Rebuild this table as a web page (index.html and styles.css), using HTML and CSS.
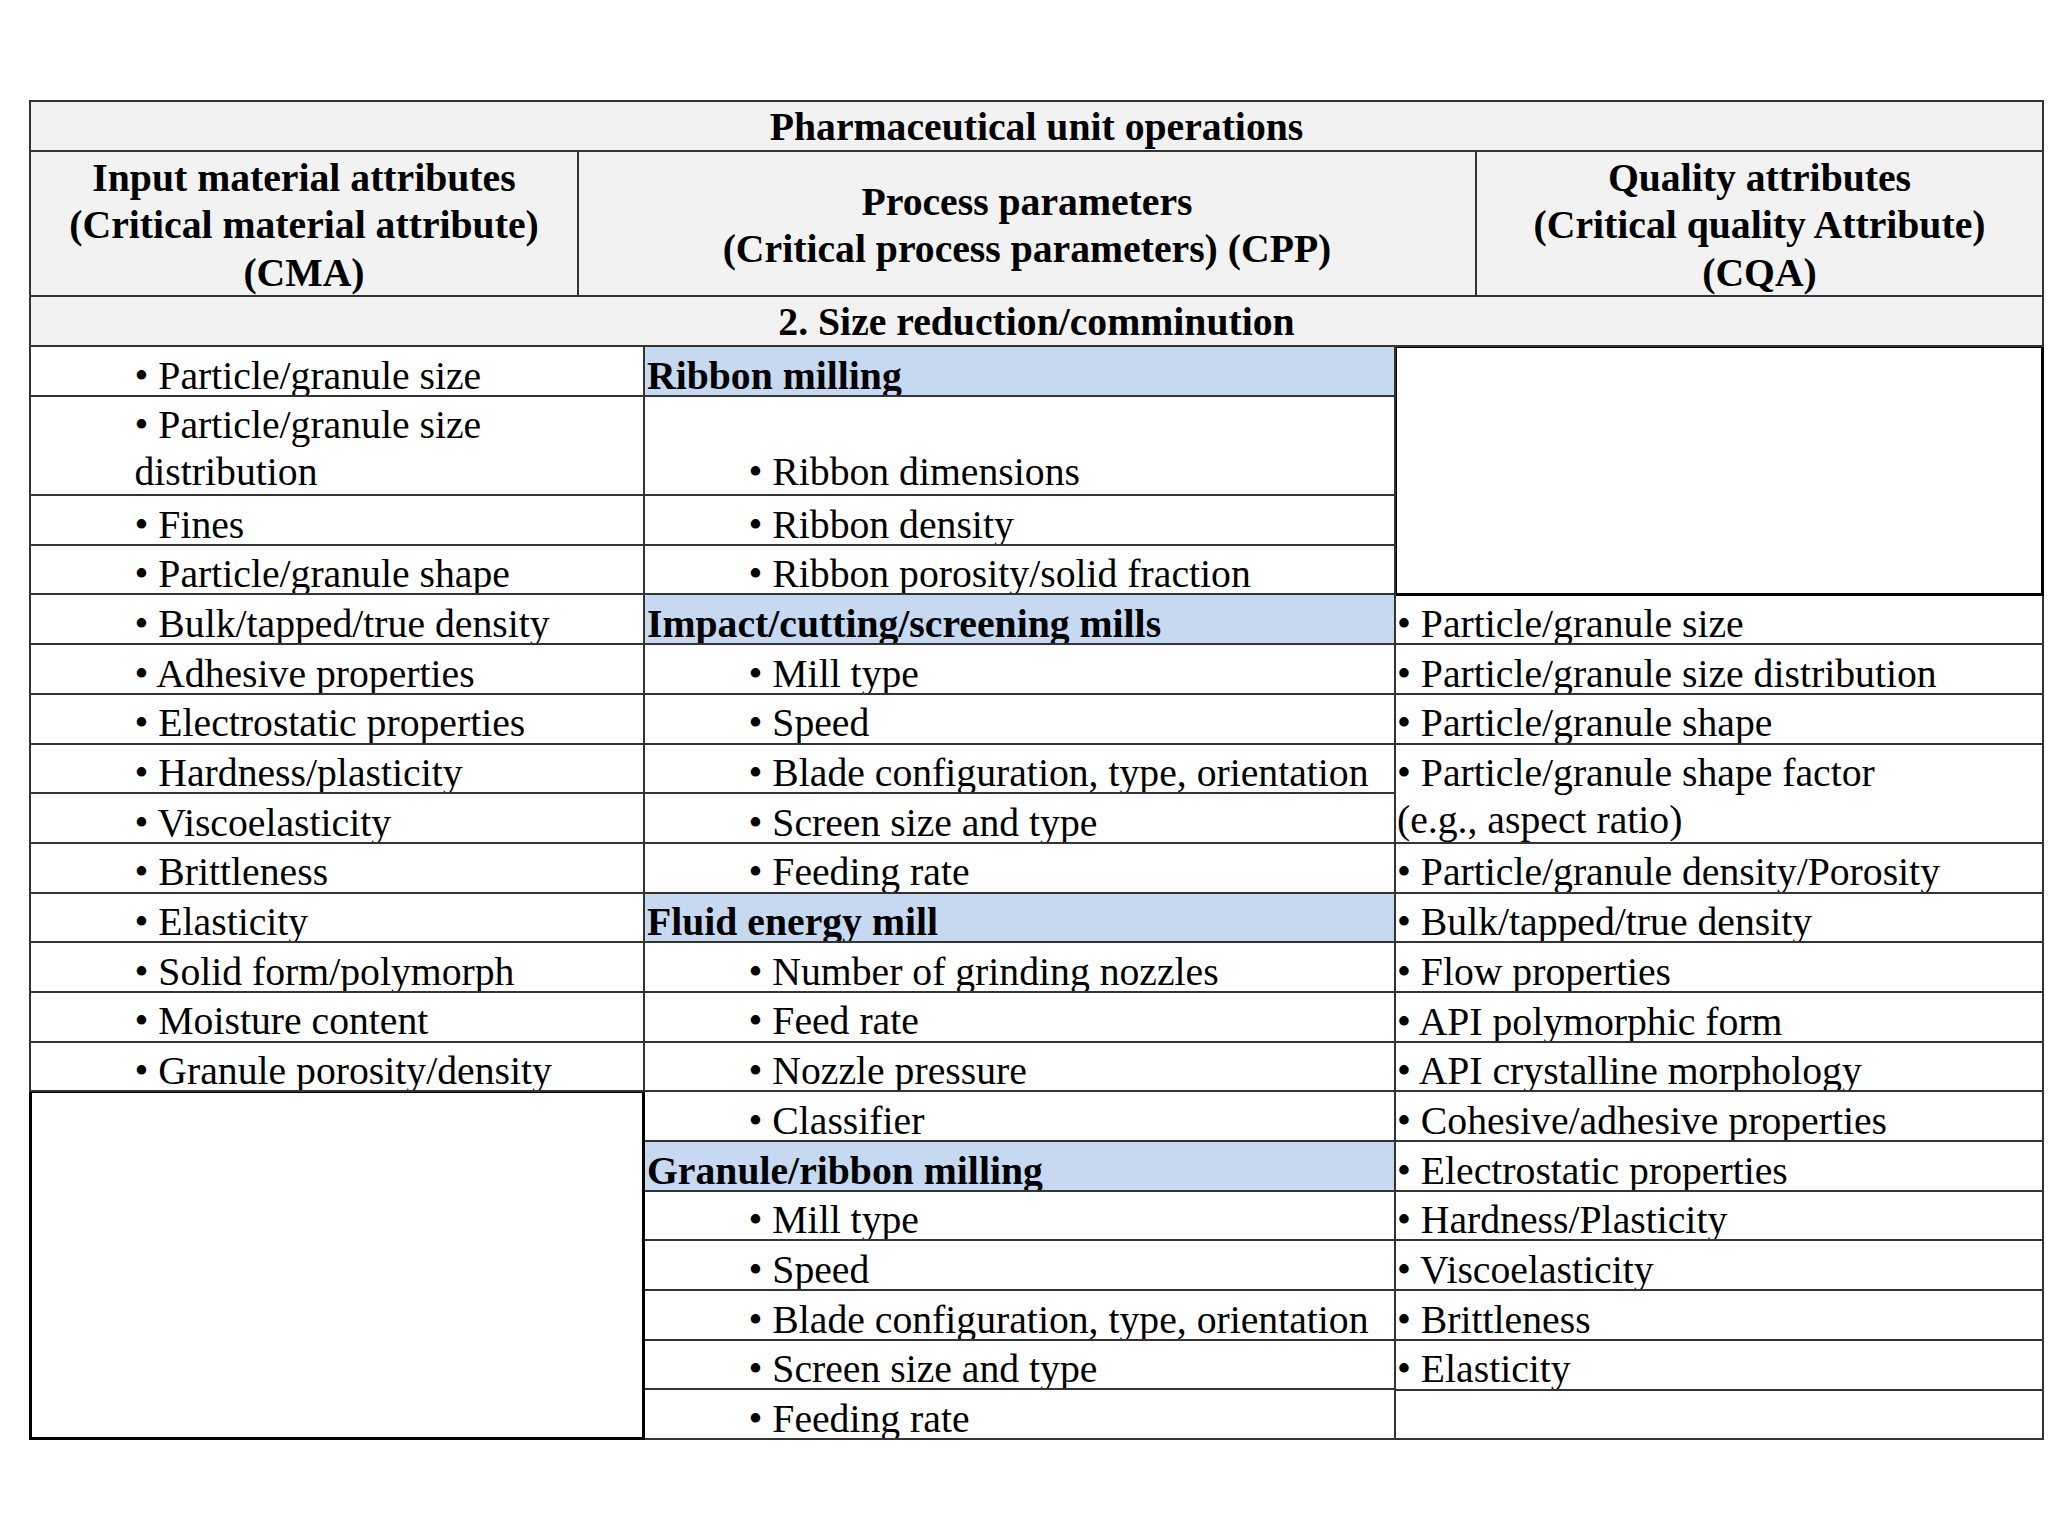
FILE: index.html
```html
<!DOCTYPE html>
<html lang="en">
<head>
<meta charset="utf-8">
<title>Pharmaceutical unit operations</title>
<link rel="stylesheet" href="styles.css">
</head>
<body>
<div class="table">
  <div class="title">Pharmaceutical unit operations</div>
  <div class="head">
    <div class="hcell h-left">Input material attributes<br>(Critical material attribute)<br>(CMA)</div>
    <div class="hcell h-mid">Process parameters<br>(Critical process parameters) (CPP)</div>
    <div class="hcell h-right">Quality attributes<br>(Critical quality Attribute)<br>(CQA)</div>
  </div>
  <div class="section">2. Size reduction/comminution</div>
  <div class="body">
    <div class="col col-left">
      <div class="cell u1">• Particle/granule size</div>
      <div class="cell u2">• Particle/granule size distribution</div>
      <div class="cell u1">• Fines</div>
      <div class="cell u1">• Particle/granule shape</div>
      <div class="cell u1">• Bulk/tapped/true density</div>
      <div class="cell u1">• Adhesive properties</div>
      <div class="cell u1">• Electrostatic properties</div>
      <div class="cell u1">• Hardness/plasticity</div>
      <div class="cell u1">• Viscoelasticity</div>
      <div class="cell u1">• Brittleness</div>
      <div class="cell u1">• Elasticity</div>
      <div class="cell u1">• Solid form/polymorph</div>
      <div class="cell u1">• Moisture content</div>
      <div class="cell u1">• Granule porosity/density</div>
      <div class="cell u7 merged merged-left"></div>
    </div>
    <div class="col col-mid">
      <div class="cell u1 hd">Ribbon milling</div>
      <div class="cell u2 bottom">• Ribbon dimensions</div>
      <div class="cell u1">• Ribbon density</div>
      <div class="cell u1">• Ribbon porosity/solid fraction</div>
      <div class="cell u1 hd">Impact/cutting/screening mills</div>
      <div class="cell u1">• Mill type</div>
      <div class="cell u1">• Speed</div>
      <div class="cell u1">• Blade configuration, type, orientation</div>
      <div class="cell u1">• Screen size and type</div>
      <div class="cell u1">• Feeding rate</div>
      <div class="cell u1 hd">Fluid energy mill</div>
      <div class="cell u1">• Number of grinding nozzles</div>
      <div class="cell u1">• Feed rate</div>
      <div class="cell u1">• Nozzle pressure</div>
      <div class="cell u1">• Classifier</div>
      <div class="cell u1 hd">Granule/ribbon milling</div>
      <div class="cell u1">• Mill type</div>
      <div class="cell u1">• Speed</div>
      <div class="cell u1">• Blade configuration, type, orientation</div>
      <div class="cell u1">• Screen size and type</div>
      <div class="cell u1">• Feeding rate</div>
    </div>
    <div class="col col-right">
      <div class="cell u5 merged merged-right"></div>
      <div class="cell u1">• Particle/granule size</div>
      <div class="cell u1">• Particle/granule size distribution</div>
      <div class="cell u1">• Particle/granule shape</div>
      <div class="cell u2">• Particle/granule shape factor<br>(e.g., aspect ratio)</div>
      <div class="cell u1">• Particle/granule density/Porosity</div>
      <div class="cell u1">• Bulk/tapped/true density</div>
      <div class="cell u1">• Flow properties</div>
      <div class="cell u1">• API polymorphic form</div>
      <div class="cell u1">• API crystalline morphology</div>
      <div class="cell u1">• Cohesive/adhesive properties</div>
      <div class="cell u1">• Electrostatic properties</div>
      <div class="cell u1">• Hardness/Plasticity</div>
      <div class="cell u1">• Viscoelasticity</div>
      <div class="cell u1">• Brittleness</div>
      <div class="cell u1">• Elasticity</div>
      <div class="cell u1"></div>
    </div>
  </div>
</div>
</body>
</html>
```

FILE: styles.css
```css
:root {
  --u: 49.7px;
  --line: #333333;
}

html, body {
  margin: 0;
  padding: 0;
  background: #ffffff;
}

body {
  font-family: "Liberation Serif", "Times New Roman", serif;
  color: #000000;
  font-size: 39.7px;
}

.table {
  margin: 100px 0 0 29px;
  width: 2015px;
  border-top: 2px solid var(--line);
}

.title {
  box-sizing: border-box;
  height: 50px;
  padding-top: 2.5px;
  line-height: 45px;
  text-align: center;
  font-weight: bold;
  background: #f2f2f2;
  border-left: 2px solid var(--line);
  border-right: 2px solid var(--line);
  border-bottom: 2px solid var(--line);
}

.head {
  display: flex;
  height: 145px;
  background: #f2f2f2;
  border-bottom: 2px solid var(--line);
  box-sizing: border-box;
}

.hcell {
  box-sizing: border-box;
  display: flex;
  align-items: center;
  justify-content: center;
  text-align: center;
  font-weight: bold;
  line-height: 47.5px;
  padding-top: 5px;
  border-right: 2px solid var(--line);
}

.h-left {
  width: 550px;
  border-left: 2px solid var(--line);
}

.h-mid {
  width: 898px;
}

.h-right {
  flex: 1;
}

.section {
  box-sizing: border-box;
  height: 50px;
  padding-top: 2.5px;
  line-height: 45px;
  text-align: center;
  font-weight: bold;
  background: #f2f2f2;
  border-left: 2px solid var(--line);
  border-right: 2px solid var(--line);
  border-bottom: 2px solid var(--line);
}

.body {
  display: flex;
}

.col {
  display: flex;
  flex-direction: column;
}

.col-left {
  width: 616px;
}

.col-mid {
  width: 751px;
}

.col-right {
  width: 648px;
}

.cell {
  box-sizing: border-box;
  padding: 5.5px 0 0 103.5px;
  line-height: 47px;
  border-right: 2px solid var(--line);
  border-bottom: 2px solid var(--line);
  white-space: nowrap;
  overflow: hidden;
}

.col-left .cell {
  border-left: 2px solid var(--line);
  white-space: normal;
}

.col-right .cell {
  padding-left: 1px;
}

.u1 { height: var(--u); }
.u2 { height: calc(var(--u) * 2); }
.u5 { height: calc(var(--u) * 5); }
.u7 { height: calc(var(--u) * 7); }

.hd {
  background: #c6d9f1;
  font-weight: bold;
  padding-left: 2px;
}

.bottom {
  padding-top: 52.5px;
}

.merged {
  border-color: #000000;
  border-style: solid;
  border-width: 1px 3px 3px 3px;
}

.col-left .merged-left {
  border-left: 3px solid #000000;
}

.col-right .merged-right {
  border-left-width: 1px;
}
```
